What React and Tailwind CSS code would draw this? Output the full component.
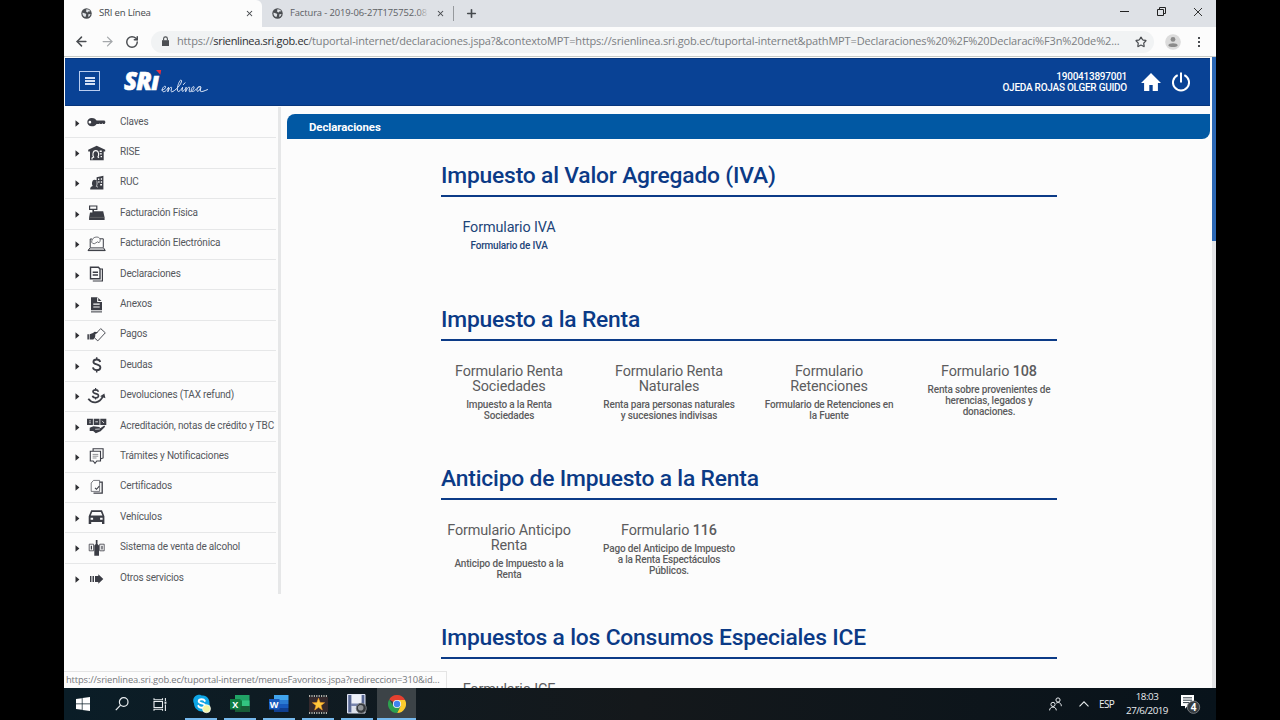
import { ArrowLeft, ArrowRight, Plus, RotateCw, Star, X } from 'lucide-react';

const INK = '#3b3d45';

const MENU = [
  { label: 'Claves', icon: KeyIcon },
  { label: 'RISE', icon: HouseIcon },
  { label: 'RUC', icon: BuildingIcon },
  { label: 'Facturación Física', icon: RegisterIcon },
  { label: 'Facturación Electrónica', icon: LaptopIcon },
  { label: 'Declaraciones', icon: CopyIcon },
  { label: 'Anexos', icon: FileIcon },
  { label: 'Pagos', icon: PayIcon },
  { label: 'Deudas', icon: DollarIcon },
  { label: 'Devoluciones (TAX refund)', icon: RefundIcon },
  { label: 'Acreditación, notas de crédito y TBC', icon: CreditIcon },
  { label: 'Trámites y Notificaciones', icon: NotesIcon },
  { label: 'Certificados', icon: CertificateIcon },
  { label: 'Vehículos', icon: CarIcon },
  { label: 'Sistema de venta de alcohol', icon: BottleIcon },
  { label: 'Otros servicios', icon: OtherIcon },
];

const SECTIONS = [
  {
    title: 'Impuesto al Valor Agregado (IVA)',
    height: 'h-[144px]',
    forms: [{ name: 'Formulario IVA', text: 'Formulario de IVA', active: true }],
  },
  {
    title: 'Impuesto a la Renta',
    height: 'h-[159px]',
    forms: [
      { name: 'Formulario Renta Sociedades', text: 'Impuesto a la Renta Sociedades' },
      { name: 'Formulario Renta Naturales', text: 'Renta para personas naturales y sucesiones indivisas' },
      { name: 'Formulario Retenciones', text: 'Formulario de Retenciones en la Fuente' },
      { name: 'Formulario', number: '108', text: 'Renta sobre provenientes de herencias, legados y donaciones.' },
    ],
  },
  {
    title: 'Anticipo de Impuesto a la Renta',
    height: 'h-[159px]',
    forms: [
      { name: 'Formulario Anticipo Renta', text: 'Anticipo de Impuesto a la Renta' },
      { name: 'Formulario', number: '116', text: 'Pago del Anticipo de Impuesto a la Renta Espectáculos Públicos.' },
    ],
  },
  {
    title: 'Impuestos a los Consumos Especiales ICE',
    height: 'h-[159px]',
    forms: [{ name: 'Formulario ICE', text: '' }],
  },
];

function Icon({ children }) {
  return (
    <svg width="20" height="20" viewBox="0 0 20 20" fill={INK} stroke="none">
      {children}
    </svg>
  );
}

function KeyIcon() {
  return (
    <Icon>
      <path
        fillRule="evenodd"
        d="M4.8 6C7.5 6 8.9 7.3 9.6 8.6H17.5L18.5 10 17.6 12H16.2L15.5 11.3 14.7 12H13.3L12.6 11.4 11.8 12H9.5C8.7 13.4 7.2 14.3 4.8 14.3 2 14.3.3 12.5.3 10.1.3 7.8 2 6 4.8 6ZM2.9 8.8A1.3 1.3 0 1 0 2.9 11.5 1.3 1.3 0 0 0 2.9 8.8Z"
      />
    </Icon>
  );
}

function HouseIcon() {
  return (
    <Icon>
      <path d="M9.7 2.8 18.2 6.8V8.6H16.7V17.3H3V8.6H1.2V6.8Z" />
      <path d="M5 16.4V15L6.7 14C5.4 12.5 5.5 7.6 8.8 7.6S12 12.5 10.9 14L12 14.8" fill="none" stroke="#fcfcfc" strokeWidth="1.1" />
      <path d="M12.7 8.3H14.8M12.7 10.9H14.8M13.6 13.6H15" stroke="#fcfcfc" strokeWidth="1.4" />
    </Icon>
  );
}

function BuildingIcon() {
  return (
    <Icon>
      <path d="M9.6 4.2 16.4 2.7V16.6H3.2C3.2 14.4 3.8 13.7 5.8 13.1 4.5 11.4 4.6 7.1 7.5 6.8 8.4 6.8 9 7.1 9.6 7.6Z" />
      <path d="M11 6.3H12.3M13.8 6H15.1M11.3 9H12.5M13.8 8.9H15.1M13.2 11.8H15" stroke="#fcfcfc" strokeWidth="1.5" />
      <path d="M9.8 8.2C10.5 10.7 9.8 12.3 9.3 13.3L11 14.2" fill="none" stroke="#fcfcfc" strokeWidth=".7" />
    </Icon>
  );
}

function RegisterIcon() {
  return (
    <Icon>
      <path d="M2.6 3H9.8V6.3H2.6Z" fill="none" stroke={INK} strokeWidth="1.2" />
      <path d="M5.4 6.5H7V8.3H16.2L17.6 14.4V17H2.1V14.4L3 9.5H5.4Z" />
      <path d="M2.5 14.4H17.3" stroke="#777" strokeWidth=".6" />
    </Icon>
  );
}

function LaptopIcon() {
  return (
    <Icon>
      <g fill="none" stroke={INK} strokeWidth="1">
        <path d="M3.2 13.5V5H5M13 4.8H16.3V13.5M3 13.9H16.6L18.2 16.6H1L3 13.9Z" />
        <path d="M4.6 8.2C4.6 5 7 2.8 10 3 12.3 3.2 13.6 4.8 13.1 7.2L12 8.8 10.7 7.8 7.2 9.8 5.5 9.2Z" strokeWidth=".7" />
      </g>
      <path d="M1 15.5H18.2V17H1Z" opacity=".75" />
    </Icon>
  );
}

function CopyIcon() {
  return (
    <Icon>
      <g fill="none" stroke={INK} strokeWidth="1.4">
        <path d="M3.5 3.2H11.4L13 5V14.8H3.5Z" />
        <path d="M13.2 5H15.4V17H5.8" strokeWidth="1.2" />
        <path d="M5.7 8.2H11M5.7 11H11" strokeWidth="1.5" />
      </g>
    </Icon>
  );
}

function FileIcon() {
  return (
    <Icon>
      <path d="M4 2.2H10.5L15 6.4V15.3H4Z" />
      <path d="M10.7 2.6V6.5H15M6.3 9.1H12.7M6.3 12H12.7" stroke="#fcfcfc" strokeWidth="1.1" fill="none" />
      <path d="M4 16.2H15V17.5H4Z" opacity=".8" />
    </Icon>
  );
}

function PayIcon() {
  return (
    <Icon>
      <path d="M9.5 8 13.7 3.6 18.3 7.8 10.8 15.9 7.2 12.6" fill="none" stroke={INK} strokeWidth=".9" />
      <path d="M.4 9.2H1.9V14.6H.4ZM2.6 9.2 6 8 7.6 6.8 10.9 7.3 9.6 8.6 8.4 9.1 8.1 12.1 6.4 14.6H2.6Z" />
    </Icon>
  );
}

function DollarIcon() {
  return (
    <Icon>
      <g fill="none" stroke={INK} strokeWidth="1.8">
        <path d="M13.2 7C12.8 5.3 11.5 4.5 9.7 4.5 7.7 4.5 6.4 5.4 6.4 7 6.4 10.4 13.4 8.5 13.4 12.4 13.4 14.1 11.9 15.1 9.8 15.1 7.7 15.1 6.2 14.2 5.9 12.4" />
        <path d="M9.7 2.3V5M9.7 14.8V17.6" strokeWidth="1.5" />
      </g>
    </Icon>
  );
}

function RefundIcon() {
  return (
    <Icon>
      <g fill="none" stroke={INK} strokeWidth="1.6">
        <path d="M11.4 5.7C11.1 4.4 10 3.9 8.6 3.9 7 3.9 6 4.6 6 5.8 6 8.3 11.5 6.9 11.5 9.7 11.5 11 10.3 11.7 8.7 11.7 7 11.7 5.8 11 5.5 9.7" />
        <path d="M8.6 2V4.5M8.6 11.2V13.4" strokeWidth="1.2" />
        <path d="M1.3 12.7C5.4 18.2 12.3 17.8 16.1 10.2" strokeWidth="1.8" />
      </g>
      <path d="M13.1 10.2 17.4 7.6 18.4 12.2Z" />
    </Icon>
  );
}

function CreditIcon() {
  return (
    <Icon>
      <path d="M0 2.8H5.9V9H0ZM6.7 2.8H12.5V9H6.7ZM13.3 2.8H19.3V9H13.3Z" />
      <path d="M2.2 4.9H3.8M2.2 6.8H3.8M8.3 5.8H11M15 4.8 17 7" stroke="#fcfcfc" strokeWidth=".8" />
      <path d="M2.7 11.7 6.4 10.3 12.4 11.1 13.2 12.2 17.3 9.6 18.1 10.8 13.6 15.2 8.8 17.2 6.2 15.1H2.7Z" />
      <path d="M8.2 13.3 12.8 13" stroke="#fcfcfc" strokeWidth=".7" />
    </Icon>
  );
}

function NotesIcon() {
  return (
    <Icon>
      <g fill="none" stroke={INK} strokeWidth="1.1">
        <path d="M6.1 5V2.8H16.1V11.9L14 12.7" />
        <path d="M3.3 5.3H13.5V15H9.8L8 17.4 6.2 15H3.3Z" />
        <path d="M5.6 8.4H11.3M5.6 10.2H11.3M5.6 12H9.5" strokeWidth=".8" opacity=".7" />
      </g>
    </Icon>
  );
}

function CertificateIcon() {
  return (
    <Icon>
      <g fill="none" stroke={INK}>
        <path d="M6.5 3.4H12.6V14.4H4.2V6Z" strokeWidth=".8" opacity=".85" />
        <path d="M12.6 5.2H15.2V16.2H6.5" strokeWidth="1.3" />
        <path d="M8 10.8 9.5 12.3 12.3 9.2" strokeWidth="1.1" />
      </g>
    </Icon>
  );
}

function CarIcon() {
  return (
    <Icon>
      <path
        fillRule="evenodd"
        d="M4.2 3.2H15L17.4 9.2V17H15V15H4.2V17H1.7V9.2ZM5.2 4.9 3.8 8.6H15.4L13.9 4.9ZM3.6 10.7V12.7H6.1V10.7ZM13.1 10.7V12.7H15.6V10.7Z"
      />
    </Icon>
  );
}

function BottleIcon() {
  return (
    <Icon>
      <path d="M8.8 2H10.5V6L12 7.6V17.7H7.3V7.6L8.8 6Z" />
      <path d="M2.2 6.2H6.6V12.8H2.2ZM12.7 6.2H17.2V12.8H12.7Z" fill="none" stroke={INK} strokeWidth=".9" opacity=".9" />
      <path d="M4.4 7.8V11.5M15 7.8V11.5" stroke={INK} strokeWidth="1.2" />
    </Icon>
  );
}

function OtherIcon() {
  return (
    <Icon>
      <path d="M3 7H4.4V13H3ZM5.5 7H7V13H5.5ZM8 7H11.3V5.2L16.3 10 11.3 14.8V13H8Z" />
    </Icon>
  );
}

function Globe() {
  return (
    <svg width="11" height="11" viewBox="0 0 12 12" className="shrink-0">
      <circle cx="6" cy="6" r="5.7" fill="#4b4e52" />
      <path d="M1.6 5.2C3.5 5 4.2 6 5.4 6.4 6 7 5.5 8.4 4.8 9.9 2.5 9.2 1.4 7.4 1.6 5.2ZM5.8 1.4C7.8 1.2 9.4 2.2 10.2 3.8L8.4 3.6 7.2 5 5.6 4.2ZM8 6.7 10.4 6.5C10 8.2 9.2 9.3 7.9 9.9Z" fill="#dfe2e6" />
    </svg>
  );
}

function TabBar() {
  return (
    <div className="flex h-[27px] items-center bg-[#dee1e6] text-[#45494d]">
      <div className="flex h-full w-[198px] items-center rounded-tr-[6px] bg-[#fcfcfc] pl-[17px] pr-[8px]">
        <Globe />
        <span className="ml-[7px] flex-1 text-[9.6px] tracking-[-0.2px]">SRI en Línea</span>
        <X size={9} strokeWidth={2.8} />
      </div>
      <div className="flex h-full w-[191px] items-center pl-[10px] pr-[8px]">
        <Globe />
        <span className="relative ml-[7px] w-[139px] whitespace-nowrap text-[9.4px] tracking-[-0.1px] text-[#5c6064]">
          Factura - 2019-06-27T175752.08
          <span className="absolute inset-y-0 right-0 w-3 bg-gradient-to-r from-transparent to-[#dee1e6]" />
        </span>
        <X size={9} strokeWidth={2.8} className="ml-auto" />
      </div>
      <div className="h-[15px] w-px bg-[#96999d]" />
      <Plus size={13} strokeWidth={3} className="ml-[11px]" />
      <div className="ml-auto flex items-center pr-[13px]">
        <div className="mb-[4px] h-px w-[9px] bg-[#222]" />
        <svg width="9" height="9" viewBox="0 0 9 9" fill="none" stroke="#222" className="mb-[4px] ml-[28px]">
          <path d="M.5 2.5H6.5V8.5H.5ZM2.5 2.3V.5H8.5V6.5H6.8" />
        </svg>
        <svg width="10" height="10" viewBox="0 0 10 10" stroke="#333" className="mb-[4px] ml-[27px]">
          <path d="M1 1 9 9M9 1 1 9" />
        </svg>
      </div>
    </div>
  );
}

function AddressBar() {
  return (
    <div className="flex h-[29px] items-center bg-[#fcfcfc] pl-[10px] pr-[16px] text-[#4a4d51]">
      <ArrowLeft size={15} strokeWidth={2.4} />
      <ArrowRight size={15} strokeWidth={2} className="ml-[11px] text-[#a5a8ab]" />
      <RotateCw size={14} strokeWidth={2.5} className="ml-[10px]" />
      <div className="ml-[12px] flex h-[22px] w-[1003px] items-center rounded-full bg-[#f1f3f4] pl-[10px] pr-[7px]">
        <svg width="9" height="11" viewBox="0 0 9 11">
          <path d="M1 4.2H8V10H1Z" fill="#4c4f53" />
          <path d="M2.6 4.5V2.8a1.9 1.9 0 0 1 3.8 0V4.5" fill="none" stroke="#4c4f53" strokeWidth="1.1" />
        </svg>
        <span className="ml-[7px] whitespace-nowrap text-[11px] tracking-[-0.15px] text-[#7b7e82]">
          https://<span className="tracking-[-0.34px] text-[#2c2e31]">srienlinea.sri.gob.ec</span>
          /tuportal-internet/declaraciones.jspa?&amp;contextoMPT=https://srienlinea.sri.gob.ec/tuportal-internet&amp;pathMPT=Declaraciones%20%2F%20Declaraci%F3n%20de%2...
        </span>
        <Star size={12} strokeWidth={2.4} className="ml-auto shrink-0" />
      </div>
      <svg width="16" height="16" viewBox="0 0 16 16" className="ml-auto">
        <circle cx="8" cy="8" r="7.8" fill="#dcdcdc" />
        <circle cx="8" cy="5.4" r="2.4" fill="#8b8b8b" />
        <path d="M3.3 11.4C3.3 8.6 12.7 8.6 12.7 11.4 11.5 13.4 4.5 13.4 3.3 11.4Z" fill="#8b8b8b" />
      </svg>
      <div className="ml-[17px] flex flex-col gap-[2px]">
        <span className="size-[2px] bg-[#4a4d51]" />
        <span className="size-[2px] bg-[#4a4d51]" />
        <span className="size-[2px] bg-[#4a4d51]" />
      </div>
    </div>
  );
}

function Header() {
  return (
    <header className="flex h-[48px] items-center border-y border-[#07357c] bg-[#094295] pl-[14px] pr-[20px] text-white">
      <button type="button" className="mb-[2px] flex h-[20px] w-[21px] flex-col items-center justify-center gap-[1px] border border-[#b9cdf0]" aria-label="Menú">
        <span className="h-[2px] w-[10px] bg-[#d5e0f5]" />
        <span className="h-[2px] w-[10px] bg-[#d5e0f5]" />
        <span className="h-[2px] w-[10px] bg-[#d5e0f5]" />
      </button>
      <div className="relative mb-[3px] ml-[24px] flex items-end">
        <span className="font-['Open_Sans'] text-[24px] font-extrabold italic leading-[24px] tracking-[-0.8px] [-webkit-text-stroke:0.6px_white]">
          SRı
        </span>
        <svg width="6" height="5" viewBox="0 0 6 5" className="absolute left-[32px] top-[1px]">
          <path d="M0 0H5.2L4.4 4.8Z" fill="#e5303f" />
        </svg>
        {/* handwritten wordmark */}
        <svg width="48" height="18" viewBox="0 0 48 18" fill="none" stroke="#dfe8f8" strokeWidth="1" strokeLinecap="round" strokeLinejoin="round" className="mb-[-3px] ml-[3px]">
          <path d="M1 12C3 12 5 10 4.5 8.5 3.5 7.5 1 10 1.2 12.2 1.8 15 4.5 13.5 6 11.5L7.6 9.2 6.8 13.8C8 10.5 10 8.2 10.6 9.5 10.8 11 9.2 13.6 10.6 13.8 13.5 13.8 21 6 20.5 2.6 19.5-.5 15.5 9 16.5 12.8 17.5 14.8 20 12 21.6 9.3L20.9 12.8C21.8 14.5 24 11.5 25.2 9.2L24.6 13.8C26 10.5 28 8 28.6 9.4 28.8 11 27.3 13.6 28.8 13.8 31 13.5 33.6 10.4 33 8.8 31.7 8 29.9 11 30.3 12.8 31 14.8 34.5 12.4 36 10.4 37.5 8.4 39.8 8.3 39.8 9 37.5 7.8 35.5 11 36 13 36.8 14.5 39 11.5 39.9 9.4L39.2 13C40.2 14.4 43 13 46.5 11.6M22.4 6.6 24 4.8" />
        </svg>
      </div>
      <div className="ml-auto text-right text-[10px] font-medium leading-[11px] tracking-[-0.25px]">
        <div>1900413897001</div>
        <div>OJEDA ROJAS OLGER GUIDO</div>
      </div>
      <svg width="20" height="18" viewBox="0 0 20 18" fill="#fff" className="ml-[14px]">
        <path d="M10 0 20 10H16.9V18H11.7V12H8.3V18H3.1V10H0Z" />
      </svg>
      <svg width="18" height="20" viewBox="0 0 18 20" fill="none" stroke="#fff" strokeWidth="2" className="ml-[11px]">
        <path d="M5.7 3.2A8 8 0 1 0 12.3 3.2" />
        <path d="M9 .5V10.5" />
      </svg>
    </header>
  );
}

function Sidebar() {
  return (
    <nav className="mt-px h-[486.5px] w-[216px] shrink-0 border-r-[3px] border-[#e6e7e8] pt-px">
      {MENU.map(({ label, icon: ItemIcon }, i) => (
        <div
          key={label}
          className={`flex h-[30.4px] w-[211px] items-center pb-px pl-[10px] ${i < MENU.length - 1 ? 'border-b border-[#e6e7e8]' : ''}`}
        >
          <svg width="5" height="7" viewBox="0 0 5 7" className="mt-[2px]">
            <path d="M.5.2 4.4 3.5.5 6.8Z" fill="#2e2f33" />
          </svg>
          <span className="ml-[7px]">
            <ItemIcon />
          </span>
          <span className="mb-px ml-[13px] whitespace-nowrap text-[10px] leading-[14px] tracking-[-0.18px] text-[#55585c]">{label}</span>
        </div>
      ))}
    </nav>
  );
}

function FormCard({ form }) {
  return (
    <div className={`px-[13px] text-center ${form.active ? 'text-[#1d4579]' : 'text-[#5c5c5e]'}`}>
      <h3 className="text-[14.4px] leading-[15.2px] tracking-[-0.12px]">
        {form.name}
        {form.number && <span className="font-medium"> {form.number}</span>}
      </h3>
      <p className="mt-[5px] text-[10px] font-medium leading-[11.2px] tracking-[-0.17px]">{form.text}</p>
    </div>
  );
}

function Content() {
  return (
    <main className="min-w-0 flex-1 pl-[6px]">
      <div className="mt-[8px] flex h-[25px] items-center rounded-br-[8px] rounded-tl-[8px] bg-[#0158a3] pl-[22px] pt-[2px] text-[11.4px] font-bold tracking-[-0.06px] text-white">
        Declaraciones
      </div>
      <div className="ml-[154px] w-[616px] pt-[18px]">
        {SECTIONS.map((section) => (
          <section key={section.title} className={section.height}>
            <h2 className="h-[40px] border-b-[2px] border-[#0c3b87] text-[22.8px] font-medium leading-[38px] tracking-[-0.18px] text-[#0b3a86]">
              {section.title}
            </h2>
            <div className="-mx-[12px] mt-[22.5px] grid grid-cols-4">
              {section.forms.map((form) => (
                <FormCard key={form.name + form.text} form={form} />
              ))}
            </div>
          </section>
        ))}
      </div>
    </main>
  );
}

function TaskButton({ running, active, children }) {
  return (
    <div className={`flex h-full w-[39.2px] flex-col items-center ${active ? 'bg-[#3c4347]' : ''}`}>
      <div className="flex flex-1 items-center pt-[2px]">{children}</div>
      <div className={`h-[2px] ${active ? 'w-full' : 'w-[32px]'} ${running ? 'bg-[#76b9ed]' : ''}`} />
    </div>
  );
}

function OfficeIcon({ letter, page, badge }) {
  return (
    <svg width="20" height="18" viewBox="0 0 20 18">
      {page}
      <path d={badge.d} fill={badge.fill} />
      <text x="5.2" y="12.6" fontSize="9" fontWeight="700" fill="#fff" textAnchor="middle" fontFamily="Open Sans, sans-serif">
        {letter}
      </text>
    </svg>
  );
}

function Taskbar() {
  return (
    <footer className="flex h-[32px] items-center bg-gradient-to-r from-[#0a1d27] via-[#14181b] to-[#08131b] text-[#e9edf0]">
      <div className="-ml-[0.5px] flex h-full">
        <TaskButton>
          <svg width="14" height="14" viewBox="0 0 14 14" fill="#fff">
            <path d="M0 2 5.8 1.2V6.6H0ZM6.5 1.1 14 0V6.6H6.5ZM0 7.3H5.8V12.7L0 11.9ZM6.5 7.3H14V14L6.5 12.9Z" />
          </svg>
        </TaskButton>
        <TaskButton>
          <svg width="14" height="14" viewBox="0 0 14 14" fill="none" stroke="#e9edf0" strokeWidth="1.2">
            <circle cx="8.7" cy="5" r="4.3" />
            <path d="M5.6 8.2.8 13.2" />
          </svg>
        </TaskButton>
        <TaskButton>
          <svg width="14" height="13" viewBox="0 0 14 13" fill="none" stroke="#e9edf0" strokeWidth="1.1" className="mr-[2px]">
            <path d="M1 3.5H9.5V9.5H1ZM1 .3V1.7H9.5V.3M1 12.7V11.3H9.5V12.7M12.4 0V3M12.4 6.5V13" />
            <path d="M11.5 3.6H13.4V5.8H11.5Z" fill="#e9edf0" stroke="none" />
          </svg>
        </TaskButton>
        <TaskButton running>
          <svg width="20" height="20" viewBox="0 0 20 20" className="ml-[2px]">
            <path d="M5.5 1C8 .2 9 1.4 11 1.6 15 2 17.8 5.5 17.5 9.2 18.6 14 15.5 18 11 17.5 6 18 2 14 2 9.5.2 6 1.8 2 5.5 1Z" fill="#0ea5e5" />
            <path d="M12.8 6.9C12.2 5.6 11 5.2 9.7 5.2 8 5.2 6.7 6 6.7 7.3 6.7 10.1 13 8.6 13 11.6 13 13 11.6 13.8 9.7 13.8 8 13.8 6.7 13 6.3 11.8" fill="none" stroke="#fff" strokeWidth="1.9" strokeLinecap="round" />
            <circle cx="14.5" cy="14.7" r="4" fill="#f1f5a6" stroke="#fff" strokeWidth=".7" />
          </svg>
        </TaskButton>
        <TaskButton running>
          <OfficeIcon
            letter="X"
            page={
              <>
                <path d="M5 0H19.5V17H5Z" fill="#21a366" />
                <path d="M5 5.5H12V11H5Z" fill="#107c41" />
                <path d="M12 5.5H19.5V11H12Z" fill="#33c481" />
                <path d="M5 11H19.5V17H5Z" fill="#185c37" />
              </>
            }
            badge={{ d: 'M0 4H10.5V14.5H0Z', fill: '#107c41' }}
          />
        </TaskButton>
        <TaskButton running>
          <OfficeIcon
            letter="W"
            page={
              <>
                <path d="M5 0H19.5V5H5Z" fill="#41a5ee" />
                <path d="M5 5H19.5V9H5Z" fill="#2b7cd3" />
                <path d="M5 9H19.5V13H5Z" fill="#185abd" />
                <path d="M5 13H19.5V17H5Z" fill="#103f91" />
              </>
            }
            badge={{ d: 'M0 4H10.5V14.5H0Z', fill: '#185abd' }}
          />
        </TaskButton>
        <TaskButton running>
          <svg width="19" height="19" viewBox="0 0 19 19">
            <path d="M0 2H19V17H0Z" fill="#35292c" />
            <path d="M0 1H19M0 18H19" stroke="#e6e0d5" strokeWidth="1.4" strokeDasharray="1.2 1.2" />
            <path d="M9.5 3.2 11.1 7.6 15.6 7.7 12 10.5 13.3 15 9.5 12.3 5.7 15 7 10.5 3.4 7.7 7.9 7.6Z" fill="#ffc83d" stroke="#f59a24" strokeWidth=".6" />
          </svg>
        </TaskButton>
        <TaskButton running>
          <svg width="20" height="20" viewBox="0 0 20 20">
            <path d="M.5.5H18V19H.5Z" fill="#7885ad" stroke="#dfe4f2" />
            <path d="M4.5.8H14.5V9.5H4.5Z" fill="#eef1f8" />
            <path d="M3 1V18M16 1V9" stroke="#394a79" />
            <path d="M4.5 12H11V19H4.5Z" fill="#dde2ec" />
            <circle cx="14.3" cy="14.3" r="5" fill="#34383c" stroke="#767a7e" />
            <circle cx="13.7" cy="13.7" r="2.8" fill="#8f9396" />
          </svg>
        </TaskButton>
        <TaskButton running active>
          <svg width="18" height="18" viewBox="0 0 18 18">
            <path d="M9 9 1.2 4.5A9 9 0 0 1 16.8 4.5L16.8 5H9Z" fill="#e5402f" />
            <path d="M16.8 4.5A9 9 0 0 1 9 18L12.5 11 9 5H16.9Z" fill="#fccb2d" />
            <path d="M1.2 4.5A9 9 0 0 0 9 18L12.5 11 5.5 11Z" fill="#2da04e" />
            <circle cx="9" cy="9" r="4.1" fill="#f5f5f5" />
            <circle cx="9" cy="9" r="3.2" fill="#4184ee" />
          </svg>
        </TaskButton>
      </div>
      <div className="ml-auto flex items-center pr-[15px]">
        <svg width="13" height="14" viewBox="0 0 13 14" fill="none" stroke="#e9edf0" strokeWidth="1">
          <circle cx="4" cy="7.4" r="2.1" />
          <path d="M.6 13.4C.6 9 7.3 9 7.3 13.4" />
          <circle cx="9" cy="3" r="2.1" />
          <path d="M7.2 6.2C9.5 4.6 12.4 6 12.3 9.2" />
        </svg>
        <svg width="10" height="6" viewBox="0 0 10 6" fill="none" stroke="#e9edf0" strokeWidth="1.1" className="ml-[17px]">
          <path d="M.5 5.3 5 .8 9.5 5.3" />
        </svg>
        <span className="ml-[10px] w-[16px] text-[10px] tracking-[-0.6px]">ESP</span>
        <div className="ml-[10px] w-[44px] text-center text-[9.8px] leading-[14px] tracking-[-0.5px]">
          <div>18:03</div>
          <div>27/6/2019</div>
        </div>
        <svg width="20" height="20" viewBox="0 0 20 20" className="ml-[12px]">
          <path d="M0 1H13V12H6.5L4 14.8V12H0Z" fill="#fff" />
          <path d="M2 3.8H11M2 6.2H11M2 8.6H8" stroke="#1a2730" strokeWidth=".9" />
          <circle cx="12.5" cy="13.2" r="6.2" fill="#353b40" stroke="#83878a" strokeWidth=".8" />
          <text x="12.5" y="16.8" fontSize="10" fontWeight="700" fill="#fff" textAnchor="middle" fontFamily="Open Sans, sans-serif">
            4
          </text>
        </svg>
      </div>
    </footer>
  );
}

export default function App() {
  return (
    <div className="flex h-[720px] w-[1280px] justify-center overflow-hidden bg-black font-['Open_Sans',sans-serif]">
      <div className="flex w-[1152px] flex-col bg-[#fcfcfc]">
        <TabBar />
        <AddressBar />
        <div className="relative flex h-[632px] overflow-hidden border-t border-[#c9cbc6] font-['Roboto',sans-serif]">
          <div className="w-[1146px] pl-px pt-px">
            <Header />
            <div className="flex">
              <Sidebar />
              <Content />
            </div>
          </div>
          <div className="ml-auto h-full w-[4px] bg-[#e3e4e6]">
            <div className="h-[184px] bg-[#2c68b5]" />
          </div>
          <div className="absolute bottom-0 left-0 flex h-[17px] w-[383px] items-center whitespace-nowrap border-r border-t border-[#e4e4e4] bg-[#fcfcfc] pl-[2px] font-['Open_Sans',sans-serif] text-[9.4px] tracking-[-0.14px] text-[#77797c]">
            https://srienlinea.sri.gob.ec/tuportal-internet/menusFavoritos.jspa?redireccion=310&amp;id...
          </div>
        </div>
        <Taskbar />
      </div>
    </div>
  );
}
